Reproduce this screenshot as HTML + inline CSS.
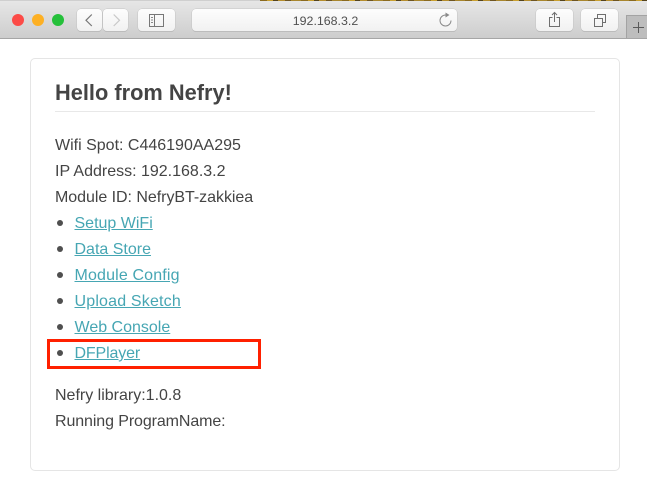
<!DOCTYPE html>
<html>
<head>
<meta charset="utf-8">
<style>
html,body{margin:0;padding:0;width:647px;height:500px;overflow:hidden;background:#fff;font-family:"Liberation Sans",sans-serif;}
.abs{position:absolute}
#bar{left:0;top:0;width:647px;height:38px;background:linear-gradient(#e7e7e7,#cdcdcd);border-bottom:1px solid #a6a6a6;}
#topl{left:0;top:0;width:260px;height:1px;background:#cfcfcf}
#wall{left:260px;top:0;width:387px;height:1px;background:repeating-linear-gradient(90deg,#8a6a20 0 7px,#c9a030 7px 13px,#54431c 13px 18px,#b58d2e 18px 25px,#6e5522 25px 31px,#a8862e 31px 41px);}
.dot{width:12px;height:12px;border-radius:50%;top:14px}
.btn{background:linear-gradient(#fdfdfd,#f1f1f1);border-radius:4px;box-shadow:0 0 0 .5px #c4c4c4,0 1px 0 #b4b4b4;top:9px;height:22px}
#card{left:30px;top:58px;width:588px;height:411px;border:1px solid #e5e5e5;border-radius:5px;}
#h{left:55px;top:79px;font-size:21.8px;line-height:28px;font-weight:bold;color:#444;white-space:nowrap}
#hr{left:55px;top:111px;width:540px;height:1px;background:#e8e8e8}
.t{left:55px;font-size:16px;line-height:26px;color:#444;white-space:nowrap}
.l{left:74.5px;font-size:16px;line-height:26px;color:#46a6b3;text-decoration:underline;white-space:nowrap}
.b{left:57px;width:6px;height:6px;border-radius:50%;background:#4f4f4f}
#red{left:47px;top:339px;width:208px;height:24px;border:3px solid #ff2000;}
</style>
</head>
<body>
<div class="abs" id="bar"></div>
<div class="abs" id="topl"></div>
<div class="abs" id="wall"></div>
<div class="abs dot" style="left:12px;background:#fc4b47"></div>
<div class="abs dot" style="left:32px;background:#fdb024"></div>
<div class="abs dot" style="left:52px;background:#25c03a"></div>

<div class="abs btn" style="left:77px;width:25px"></div>
<div class="abs btn" style="left:103px;width:25px"></div>
<div class="abs btn" style="left:138px;width:37px"></div>
<div class="abs btn" style="left:192px;width:265px"></div>
<div class="abs btn" style="left:536px;width:37px"></div>
<div class="abs btn" style="left:581px;width:37px"></div>

<svg class="abs" style="left:0;top:0" width="647" height="40" fill="none">
  <path d="M91.8 14.5 L86 20.3 L91.8 26" stroke="#777" stroke-width="1.2"/>
  <path d="M113.7 14.5 L119.5 20.3 L113.7 26" stroke="#c8c8c8" stroke-width="1.2"/>
  <path d="M149.5 14.5H163.5V26.5H149.5Z M154.5 14.5V26.5" stroke="#777" stroke-width="1"/>
  <path d="M151 17.5H153M151 20H153M151 22.5H153" stroke="#888" stroke-width="1"/>
  <path d="M445.5 15 A5.5 5.5 0 1 0 451 20.5" stroke="#8a8a8a" stroke-width="1"/>
  <path d="M445.5 12.5 L449.5 15 L445.5 17.5Z" fill="#8a8a8a"/>
  <path d="M552.5 17.5H549.5V26.5H559.5V17.5H556.5" stroke="#6f6f6f" stroke-width="1"/>
  <path d="M554.5 12.5V22M552 15L554.5 12.5L557 15" stroke="#6f6f6f" stroke-width="1"/>
  <path d="M594.5 18.5H602.5V26.5H594.5Z" stroke="#6f6f6f" stroke-width="1"/>
  <path d="M597.5 18V14.5H605.5V22.5H603" stroke="#6f6f6f" stroke-width="1"/>
</svg>

<div class="abs" style="left:626px;top:15px;width:21px;height:23px;background:#bdbdbd;border-left:1px solid #a3a3a3;border-top:1px solid #a3a3a3;box-sizing:border-box"></div>
<svg class="abs" style="left:626px;top:15px" width="21" height="23" fill="none">
  <path d="M7 12.5H18M12.5 7V18" stroke="#5a5a5a" stroke-width="1"/>
</svg>

<div class="abs" style="left:192px;top:10px;width:241px;text-align:center;padding-left:26px;box-sizing:border-box;font-size:12.4px;line-height:22px;color:#505050">192.168.3.2</div>

<div class="abs" id="card"></div>
<div class="abs" id="h">Hello from Nefry!</div>
<div class="abs" id="hr"></div>

<div class="abs t" style="top:133px">Wifi Spot: C446190AA295</div>
<div class="abs t" style="top:159px">IP Address: 192.168.3.2</div>
<div class="abs t" style="top:185px;letter-spacing:-.04px">Module ID: NefryBT-zakkiea</div>

<div class="abs b" style="top:220px"></div><div class="abs l" style="top:211px">Setup WiFi</div>
<div class="abs b" style="top:246px"></div><div class="abs l" style="top:237px">Data Store</div>
<div class="abs b" style="top:272px"></div><div class="abs l" style="top:263px;letter-spacing:.15px">Module Config</div>
<div class="abs b" style="top:298px"></div><div class="abs l" style="top:289px;letter-spacing:.18px">Upload Sketch</div>
<div class="abs b" style="top:324px"></div><div class="abs l" style="top:315px">Web Console</div>
<div class="abs b" style="top:350px"></div><div class="abs l" style="top:341px;letter-spacing:-.14px">DFPlayer</div>

<div class="abs t" style="top:383px">Nefry library:1.0.8</div>
<div class="abs t" style="top:409px;letter-spacing:-.1px">Running ProgramName:</div>

<div class="abs" id="red"></div>
</body>
</html>
